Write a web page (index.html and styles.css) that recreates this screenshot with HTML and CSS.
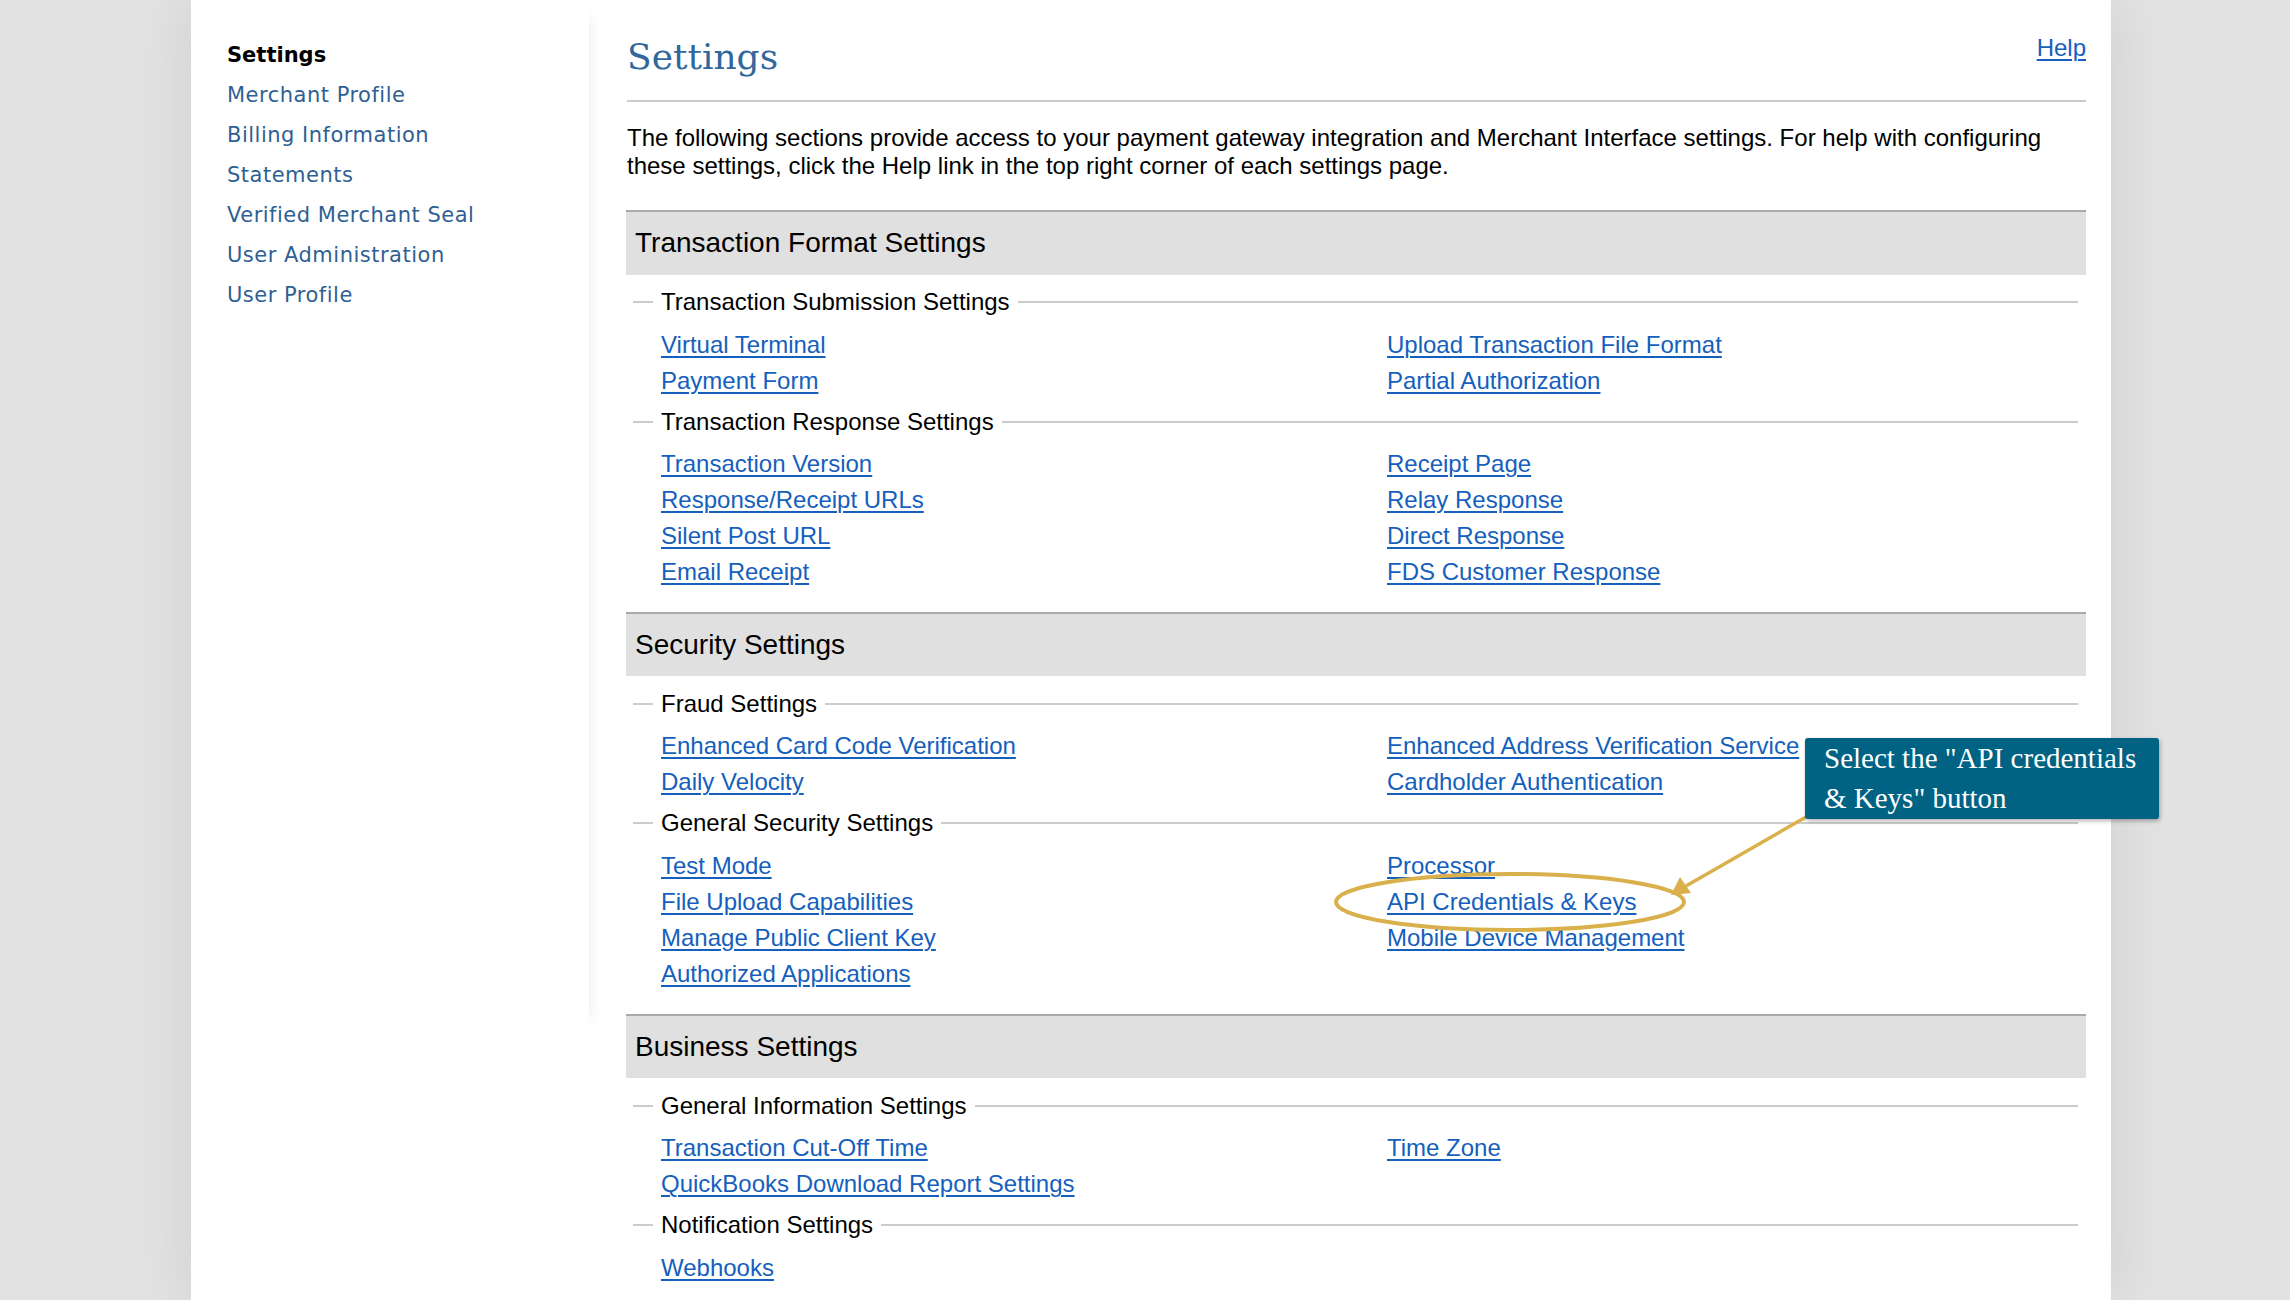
FILE: index.html
```html
<!DOCTYPE html>
<html lang="en">
<head>
<meta charset="utf-8">
<title>Settings</title>
<link rel="stylesheet" href="styles.css">
</head>
<body>
<div class="page">
  <div class="panel">
    <nav class="sidebar">
      <div class="side-title">Settings</div>
      <a class="side-link" href="#">Merchant Profile</a>
      <a class="side-link" href="#">Billing Information</a>
      <a class="side-link" href="#">Statements</a>
      <a class="side-link" href="#">Verified Merchant Seal</a>
      <a class="side-link" href="#">User Administration</a>
      <a class="side-link" href="#">User Profile</a>
    </nav>
    <main class="main">
      <div class="head">
        <h1 class="title">Settings</h1>
        <a class="help" href="#">Help</a>
      </div>
      <p class="intro">The following sections provide access to your payment gateway integration and Merchant Interface settings. For help with configuring these settings, click the Help link in the top right corner of each settings page.</p>

      <section class="section">
        <h2 class="band">Transaction Format Settings</h2>
        <div class="group">
          <div class="legend"><span>Transaction Submission Settings</span></div>
          <div class="links">
            <a href="#">Virtual Terminal</a><a href="#">Upload Transaction File Format</a>
            <a href="#">Payment Form</a><a href="#">Partial Authorization</a>
          </div>
        </div>
        <div class="group">
          <div class="legend"><span>Transaction Response Settings</span></div>
          <div class="links">
            <a href="#">Transaction Version</a><a href="#">Receipt Page</a>
            <a href="#">Response/Receipt URLs</a><a href="#">Relay Response</a>
            <a href="#">Silent Post URL</a><a href="#">Direct Response</a>
            <a href="#">Email Receipt</a><a href="#">FDS Customer Response</a>
          </div>
        </div>
      </section>

      <section class="section">
        <h2 class="band">Security Settings</h2>
        <div class="group">
          <div class="legend"><span>Fraud Settings</span></div>
          <div class="links">
            <a href="#">Enhanced Card Code Verification</a><a href="#">Enhanced Address Verification Service</a>
            <a href="#">Daily Velocity</a><a href="#">Cardholder Authentication</a>
          </div>
        </div>
        <div class="group">
          <div class="legend"><span>General Security Settings</span></div>
          <div class="links">
            <a href="#">Test Mode</a><a href="#">Processor</a>
            <a href="#">File Upload Capabilities</a><a href="#">API Credentials &amp; Keys</a>
            <a href="#">Manage Public Client Key</a><a href="#">Mobile Device Management</a>
            <a href="#">Authorized Applications</a>
          </div>
        </div>
      </section>

      <section class="section">
        <h2 class="band">Business Settings</h2>
        <div class="group">
          <div class="legend"><span>General Information Settings</span></div>
          <div class="links">
            <a href="#">Transaction Cut-Off Time</a><a href="#">Time Zone</a>
            <a href="#">QuickBooks Download Report Settings</a>
          </div>
        </div>
        <div class="group">
          <div class="legend"><span>Notification Settings</span></div>
          <div class="links">
            <a href="#">Webhooks</a>
          </div>
        </div>
      </section>
    </main>
  </div>

  <svg class="annot" width="2290" height="1300" viewBox="0 0 2290 1300" aria-hidden="true">
    <ellipse cx="1510" cy="902" rx="174" ry="28" fill="none" stroke="#d9b04b" stroke-width="4"/>
    <line x1="1806" y1="817" x2="1686" y2="886" stroke="#d9b04b" stroke-width="3.5"/>
    <polygon points="1671,895 1680,877 1691,893" fill="#d9b04b"/>
  </svg>
  <div class="callout">Select the "API credentials<br>&amp; Keys" button</div>
</div>
</body>
</html>
```

FILE: styles.css
```css
html, body {
  margin: 0;
  padding: 0;
}

body {
  background: #e2e2e2;
  font-family: "Liberation Sans", Arial, sans-serif;
}

.page {
  position: relative;
  width: 2290px;
  height: 1300px;
  overflow: hidden;
}

.panel {
  margin-left: 191px;
  width: 1920px;
  min-height: 1300px;
  background: #ffffff;
  box-shadow: 0 0 60px rgba(0, 0, 0, 0.09);
  display: flex;
  align-items: flex-start;
}

/* Sidebar */
.sidebar {
  width: 398px;
  flex: none;
  box-sizing: border-box;
  margin-top: 8px;
  height: 1018px;
  padding: 27px 0 0 36px;
  display: flex;
  flex-direction: column;
  font-family: "DejaVu Sans", Verdana, sans-serif;
  font-size: 21px;
  line-height: 40px;
  box-shadow: 10px 0 12px -8px rgba(0, 0, 0, 0.07);
}

.side-title {
  font-weight: bold;
  color: #000;
}

.side-link {
  color: #2f5f93;
  text-decoration: none;
  letter-spacing: 0.5px;
}

/* Main */
.main {
  flex: 1;
  min-width: 0;
  padding: 32px 25px 0 38px;
}

.head {
  display: flex;
  justify-content: space-between;
  align-items: flex-start;
  border-bottom: 2px solid #cbcbcb;
  padding-bottom: 21px;
}

.title {
  margin: 3px 0 0;
  font-family: "DejaVu Serif", Georgia, serif;
  font-weight: normal;
  font-size: 36px;
  line-height: 44px;
  color: #32679c;
}

.help {
  margin-top: 2px;
  font-size: 24px;
  line-height: 28px;
  color: #1560bd;
  text-decoration-thickness: 2px;
  text-underline-offset: 3px;
}

.intro {
  margin: 22px 0 30px;
  font-size: 24px;
  line-height: 28px;
  color: #000;
}

.section + .section {
  margin-top: 22px;
}

.band {
  margin: 0 0 9.8px -1px;
  height: 62.5px;
  display: flex;
  align-items: center;
  padding-left: 9px;
  background: #e0e0e0;
  border-top: 2px solid #ababab;
  font-size: 28px;
  font-weight: normal;
  color: #000;
}

.group {
  margin: 0 8px 0 6px;
}

.group + .group {
  margin-top: 5px;
}

.legend {
  display: flex;
  align-items: center;
  height: 36px;
  font-size: 24px;
  color: #000;
}

.legend::before {
  content: "";
  width: 20px;
  height: 2px;
  background: #cccccc;
  margin-right: 8px;
}

.legend::after {
  content: "";
  flex: 1;
  height: 2px;
  background: #cccccc;
  margin-left: 8px;
}

.links {
  margin-top: 6.3px;
  padding-left: 28px;
  display: grid;
  grid-template-columns: 726px 1fr;
  grid-auto-rows: 36px;
  align-items: center;
  font-size: 24px;
  line-height: 28px;
}

.links a {
  justify-self: start;
  color: #1560bd;
  text-decoration-thickness: 2px;
  text-underline-offset: 3px;
}

/* Annotation overlay */
.annot {
  position: absolute;
  left: 0;
  top: 0;
  pointer-events: none;
}

.callout {
  position: absolute;
  left: 1805px;
  top: 738px;
  width: 354px;
  height: 81px;
  box-sizing: border-box;
  padding: 0 0 0 19px;
  background: #006384;
  border-radius: 3px;
  box-shadow: 1px 2px 4px rgba(0, 0, 0, 0.3);
  color: #ffffff;
  font-family: "Liberation Serif", "Times New Roman", serif;
  font-size: 29px;
  line-height: 40px;
}
```
